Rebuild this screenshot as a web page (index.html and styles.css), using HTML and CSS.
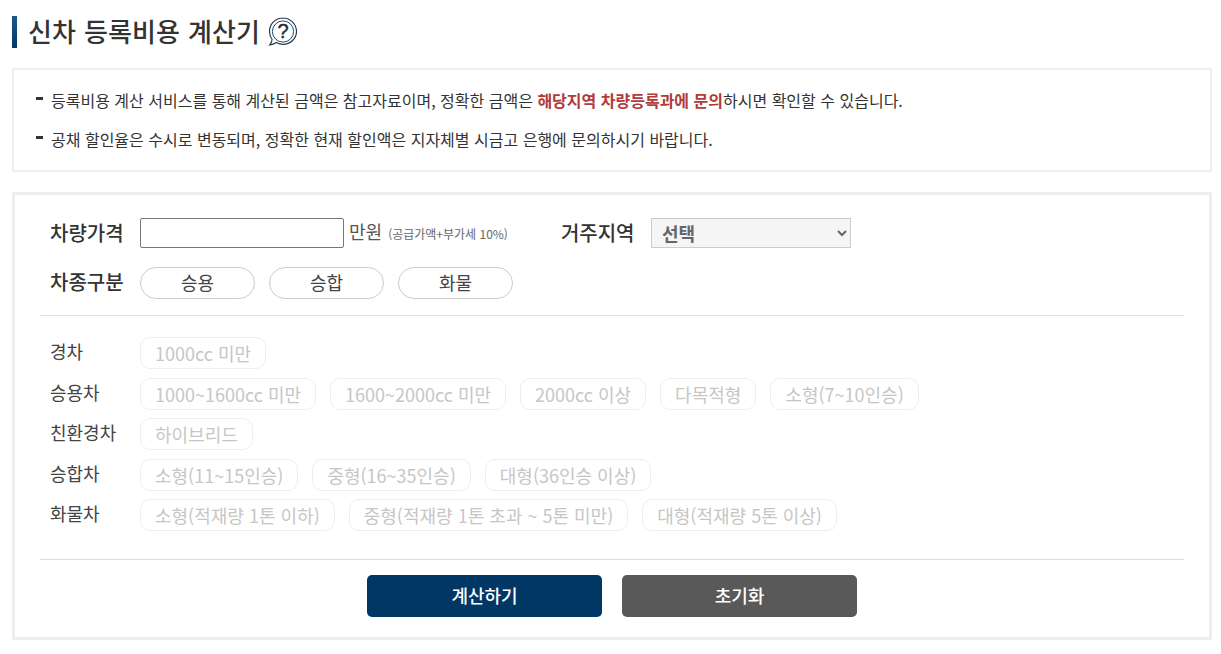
FILE: index.html
```html
<!DOCTYPE html>
<html lang="ko">
<head>
<meta charset="utf-8">
<title>신차 등록비용 계산기</title>
<link rel="stylesheet" href="styles.css">
</head>
<body>
<h1 class="title"><span class="title-text">신차 등록비용 계산기</span>
<svg class="help" viewBox="0 0 30 30" width="30" height="30" aria-hidden="true">
<path d="M15 1C7.400 1 1.500 7 1.500 14.500c0 3 1 5.800 2.600 8-.2 2-1 3.800-2.400 5.500 2.600-.3 4.900-1.200 6.700-2.500 2 1.200 4.300 1.900 6.600 1.900 7.600 0 13.500-6 13.500-12.900S22.600 1 15 1z" fill="none" stroke="#2a3a4a" stroke-width="1.200"/>
<circle cx="15" cy="14.500" r="10.600" fill="none" stroke="#1d4a75" stroke-width="1"/>
<text x="15" y="21" text-anchor="middle" class="help-q">?</text>
</svg></h1>
<div class="notice">
<p class="notice-line">등록비용 계산 서비스를 통해 계산된 금액은 참고자료이며, 정확한 금액은 <strong class="hl">해당지역 차량등록과에 문의</strong>하시면 확인할 수 있습니다.</p>
<p class="notice-line">공채 할인율은 수시로 변동되며, 정확한 현재 할인액은 지자체별 시금고 은행에 문의하시기 바랍니다.</p>
</div>
<form class="calc">
<div class="row-top">
<span class="main-label">차량가격</span>
<input class="price" type="text">
<span class="unit">만원</span>
<span class="unit-note">(공급가액+부가세 10%)</span>
<span class="main-label region-label">거주지역</span>
<select class="region"><option>선택</option></select>
</div>
<div class="row-type">
<span class="main-label">차종구분</span>
<div class="type-pills">
<button type="button" class="type-pill">승용</button>
<button type="button" class="type-pill">승합</button>
<button type="button" class="type-pill">화물</button>
</div>
</div>
<hr class="rule">
<div class="options">
<div class="opt-row"><span class="opt-label">경차</span><span class="chip">1000cc 미만</span></div>
<div class="opt-row"><span class="opt-label">승용차</span><span class="chip">1000~1600cc 미만</span><span class="chip">1600~2000cc 미만</span><span class="chip">2000cc 이상</span><span class="chip">다목적형</span><span class="chip">소형(7~10인승)</span></div>
<div class="opt-row"><span class="opt-label">친환경차</span><span class="chip">하이브리드</span></div>
<div class="opt-row"><span class="opt-label">승합차</span><span class="chip">소형(11~15인승)</span><span class="chip">중형(16~35인승)</span><span class="chip">대형(36인승 이상)</span></div>
<div class="opt-row"><span class="opt-label">화물차</span><span class="chip">소형(적재량 1톤 이하)</span><span class="chip">중형(적재량 1톤 초과 ~ 5톤 미만)</span><span class="chip">대형(적재량 5톤 이상)</span></div>
</div>
<hr class="rule rule-bottom">
<div class="actions">
<button type="button" class="btn btn-primary">계산하기</button>
<button type="button" class="btn btn-reset">초기화</button>
</div>
</form>
</body>
</html>
```

FILE: styles.css
```css
* { box-sizing: border-box; }
html, body { margin: 0; padding: 0; background: #fff; }
body {
  width: 1221px;
  height: 654px;
  overflow: hidden;
  padding: 16px 9px 0 12px;
  font-family: "Noto Sans CJK KR", "Noto Sans", sans-serif;
  color: #333;
}
.title {
  display: flex;
  align-items: center;
  height: 32px;
  margin: 0;
  padding-left: 11px;
  border-left: 5px solid #0f4c81;
  border-image: linear-gradient(#1a5a92, #003764) 1;
  font-size: 26px;
  font-weight: 500;
  line-height: 32px;
  color: #333;
}
.title-text { margin-bottom: 2px; word-spacing: 1px; }
.help { margin-left: 8px; flex: none; }
.help-q { font-size: 20px; font-weight: 400; fill: #1a2a3a; stroke: #1a2a3a; stroke-width: 0.4px; font-family: "Liberation Sans", sans-serif; }
.notice {
  height: 104px;
  margin-top: 20px;
  padding: 18px 20px 0 22px;
  border: 2px solid #eee;
}
.notice-line {
  position: relative;
  margin: 0 0 15px;
  padding-left: 15px;
  font-size: 16px;
  line-height: 24px;
  color: #333;
}
.notice-line::before {
  content: "";
  position: absolute;
  left: 0;
  top: 9px;
  width: 7px;
  height: 3px;
  background: #333;
}
.hl { color: #b23a3a; font-weight: 700; }
.calc {
  height: 448px;
  margin-top: 20px;
  padding: 23px 25px 0 25px;
  border: 3px solid #eee;
}
.row-top { display: flex; align-items: center; height: 30px; padding-left: 10px; }
.main-label { font-size: 20px; font-weight: 500; width: 90px; flex: none; color: #333; }
.row-top .main-label { margin-bottom: 2px; }
.row-type .main-label { margin-bottom: 4px; }
.price { width: 204px; height: 30px; border: 1px solid #767676; border-radius: 2px; background: #fff; }
.unit { margin-left: 5px; margin-bottom: 4px; font-size: 18px; color: #555; }
.unit-note { margin-left: 6px; font-size: 12px; color: #666; }
.region-label { margin-left: 53px; }
.region {
  width: 200px;
  height: 30px;
  padding-left: 6px;
  border: 1px solid #ccc;
  border-radius: 0;
  background-color: #f5f5f5;
  font-family: inherit;
  font-size: 18px;
  font-weight: 700;
  color: #666;
}
.row-type { display: flex; align-items: center; height: 32px; margin-top: 19px; padding-left: 10px; }
.type-pills { display: flex; gap: 14px; }
.type-pill {
  width: 115px;
  height: 32px;
  padding: 0 0 2px;
  border: 1px solid #ccc;
  border-radius: 16px;
  background: #fff;
  font-family: inherit;
  font-size: 18px;
  color: #444;
}
.rule { height: 1px; margin: 16px 0 0; border: 0; background: #ddd; }
.options { display: flex; flex-direction: column; gap: 8.500px; margin-top: 21px; padding-left: 10px; }
.opt-row { display: flex; align-items: center; gap: 14px; height: 32px; }
.opt-label { width: 76px; margin-top: -4px; font-size: 18px; color: #444; flex: none; }
.chip {
  height: 32px;
  padding: 0 14px;
  border: 1px solid #eee;
  border-radius: 10px;
  font-size: 18px;
  line-height: 30px;
  color: #c6c6c6;
}
.rule-bottom { margin-top: 28px; }
.actions { display: flex; justify-content: center; gap: 20px; margin-top: 15px; }
.btn {
  width: 235px;
  height: 42px;
  padding: 0 0 2px;
  border: 0;
  border-radius: 5px;
  font-family: inherit;
  font-size: 18px;
  font-weight: 500;
  color: #fff;
}
.btn-primary { background: #003764; }
.btn-reset { background: #595959; }
```
